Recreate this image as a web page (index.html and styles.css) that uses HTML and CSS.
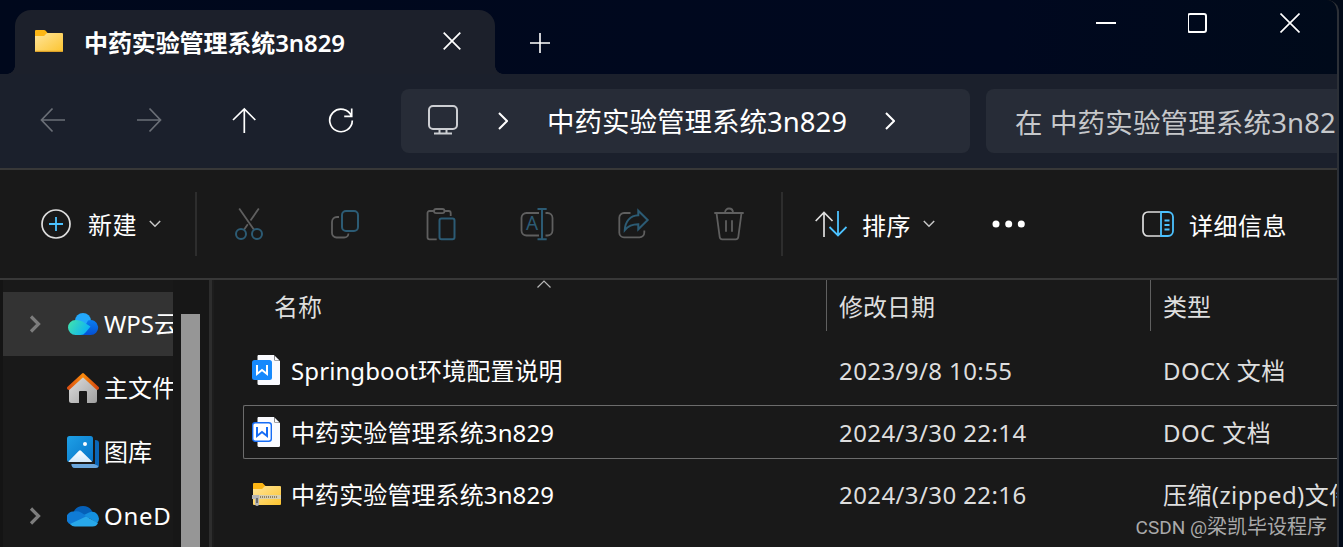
FILE: index.html
```html
<!DOCTYPE html>
<html lang="zh-CN">

<head>
    <meta charset="UTF-8">
    <meta name="viewport" content="width=device-width, initial-scale=1.0">
    <title>中药实验管理系统3n829</title>
    <link rel="stylesheet" href="styles.css">
</head>

<body>
    <div class="window">
        <header class="titlebar">
            <div class="tab">
                <svg class="tab-icon" width="28" height="22" viewBox="0 0 28 22">
                    <defs>
                        <linearGradient id="folder" x1="0" y1="0" x2="1" y2="1">
                            <stop offset="0" stop-color="#ffe59b" />
                            <stop offset="1" stop-color="#fcc42f" />
                        </linearGradient>
                    </defs>
                    <path d="M0 1q0-1 1-1h8q1 0 1.700.8L13 3.500V7H0z" fill="#fdb614" />
                    <path d="M0 6h9l3-3h15q1 0 1 1v17q0 1-1 1H1q-1 0-1-1z" fill="url(#folder)" />
                    <path d="M0.500 21.500h27" stroke="#dda128" />
                </svg>
                <span class="tab-title">中药实验管理系统3n829</span>
                <svg class="tab-close" width="18" height="18" viewBox="0 0 18 18">
                    <path d="M.7.700l16.600 16.600M17.300.700L.7 17.300" />
                </svg>
            </div>
            <svg class="new-tab" width="20" height="20" viewBox="0 0 20 20">
                <path d="M10 0v20M0 10h20" />
            </svg>
            <div class="controls">
                <svg width="20" height="20" viewBox="0 0 20 20"><path d="M0 10h20" /></svg>
                <svg width="20" height="20" viewBox="0 0 20 20"><rect x="1" y="1" width="18" height="18" rx="2" /></svg>
                <svg class="thin" width="20" height="20" viewBox="0 0 20 20"><path d="M.5.500l19 19M19.500.500l-19 19" /></svg>
            </div>
        </header>

        <nav class="navbar">
            <div class="nav-buttons">
                <svg class="off" width="26" height="26" viewBox="0 0 26 26"><path d="M25 13H1.500M12.500 1.500L1.500 13l11 11.500" /></svg>
                <svg class="off" width="26" height="26" viewBox="0 0 26 26"><path d="M1 13h23.500M13.500 1.500l11 11.500-11 11.500" /></svg>
                <svg width="26" height="26" viewBox="0 0 26 26"><path d="M12.300 26V2M1 13L12.300 2l11 11" /></svg>
                <svg width="26" height="26" viewBox="0 0 26 26"><path d="M23.500 9.200a11.300 11.300 0 1 0 .8 4.300M23.700 1.500v7.800h-7.500" /></svg>
            </div>
            <div class="address">
                <svg class="pc" width="32" height="32" viewBox="0 0 32 32">
                    <rect x="2" y="2" width="28" height="23" rx="4" />
                    <path d="M12.500 25v4M19.500 25v4M7 29.500h18" />
                </svg>
                <svg class="crumb-arrow" width="10" height="18" viewBox="0 0 10 18"><path d="M1 1l8 8-8 8" /></svg>
                <span class="crumb">中药实验管理系统3n829</span>
                <svg class="crumb-arrow" width="10" height="18" viewBox="0 0 10 18"><path d="M1 1l8 8-8 8" /></svg>
            </div>
            <div class="search"><span>在 中药实验管理系统3n82</span></div>
        </nav>

        <div class="commands">
            <div class="command new">
                <svg width="30" height="30" viewBox="0 0 30 30">
                    <circle class="light" cx="15" cy="15" r="14" />
                    <path class="accent" d="M15 8v14M8 15h14" />
                </svg>
                <span>新建</span>
                <svg class="down" width="12" height="8" viewBox="0 0 12 8"><path d="M.8 1L6 6.200 11.200 1" /></svg>
            </div>
            <div class="tools">
                <svg width="32" height="32" viewBox="0 0 32 32">
                    <path d="M6.200.500L20.800 21.500M25.800.500L17.500 12.500M14.800 16.300L11 21.800" />
                    <circle class="blue" cx="8" cy="26" r="5" />
                    <circle class="blue" cx="24" cy="26" r="5" />
                </svg>
                <svg width="32" height="32" viewBox="0 0 32 32">
                    <path d="M10 9H8a5 5 0 0 0-5 5v11a4.500 4.500 0 0 0 4.500 4.500H15a4.500 4.500 0 0 0 4.500-4" />
                    <rect class="blue" x="13" y="3" width="16" height="20" rx="4" />
                </svg>
                <svg width="32" height="32" viewBox="0 0 32 32">
                    <path d="M9 3H4.500a2 2 0 0 0-2 2v24.300a2 2 0 0 0 2 2h7.200M19.500 3h4.200a2 2 0 0 1 2 2v3" />
                    <rect x="9" y="1" width="10.500" height="4.200" rx="2.100" />
                    <rect class="blue" x="14.500" y="10.500" width="15" height="20.800" rx="2" />
                </svg>
                <svg width="32" height="32" viewBox="0 0 32 32">
                    <path d="M18 5H5.500a5 5 0 0 0-5 5v12.500a5 5 0 0 0 5 5H18M24.500 5h2a5 5 0 0 1 5 5v12.500a5 5 0 0 1-5 5h-2" />
                    <path class="blue" d="M21 .8v30.500M16.500.900h9.200M16.500 31.200h9.200" />
                    <text x="11" y="22.300" text-anchor="middle" class="letter">A</text>
                </svg>
                <svg width="32" height="32" viewBox="0 0 32 32">
                    <path d="M13.500 5H7a4.700 4.700 0 0 0-4.700 4.700v15A4.700 4.700 0 0 0 7 29.300h15.600a4.700 4.700 0 0 0 4.700-4.700V22.500" />
                    <path class="blue" d="M21.300 2.700L30.700 12l-9.400 9.300v-5c-6 0-10 1.500-13.500 5.700C8.200 13.500 13 7.600 21.300 7.300z" />
                </svg>
                <svg width="32" height="32" viewBox="0 0 32 32">
                    <path d="M1.300 5h29.400M12 5c0-6 8-6 8 0M3.500 5l3.200 24a2.500 2.500 0 0 0 2.500 2.300h13.600a2.500 2.500 0 0 0 2.500-2.300L28.500 5M13 12.300v11.500M19 12.300v11.500" />
                </svg>
            </div>
            <div class="command sort">
                <svg width="32" height="26" viewBox="0 0 32 26">
                    <path class="light" d="M9 26V1.500M.7 10L9 1.500l8.500 8.500" />
                    <path class="accent" d="M23 0v24.500M14.500 16l8.500 8.500 8.500-8.500" />
                </svg>
                <span>排序</span>
                <svg class="down" width="12" height="8" viewBox="0 0 12 8"><path d="M.8 1L6 6.200 11.200 1" /></svg>
            </div>
            <svg class="more" width="34" height="8" viewBox="0 0 34 8">
                <circle cx="4" cy="4" r="3.500" />
                <circle cx="16.700" cy="4" r="3.500" />
                <circle cx="29.300" cy="4" r="3.500" />
            </svg>
            <div class="command details">
                <svg width="32" height="26" viewBox="0 0 32 26">
                    <path class="light" d="M18.500 1H6a5 5 0 0 0-5 5v14a5 5 0 0 0 5 5h12.500" />
                    <path class="accent" d="M19 1h7a5 5 0 0 1 5 5v14a5 5 0 0 1-5 5h-7zM22.500 9.500h5M22.500 14h5M22.500 18.500h5" />
                </svg>
                <span>详细信息</span>
            </div>
        </div>

        <main class="content">
            <aside class="sidebar">
                <ul class="tree">
                    <li class="active">
                        <svg class="expand" width="12" height="18" viewBox="0 0 12 18"><path d="M2 1.500L9.500 9 2 16.500" /></svg>
                        <svg width="32" height="32" viewBox="0 0 32 32">
                            <defs>
                                <linearGradient id="wpsLeft" x1="0" y1=".3" x2="1" y2=".7">
                                    <stop offset="0" stop-color="#3ee0b0" />
                                    <stop offset="1" stop-color="#08aefc" />
                                </linearGradient>
                                <linearGradient id="wpsRight" x1="0" y1="0" x2="0" y2="1">
                                    <stop offset="0" stop-color="#0a7df0" />
                                    <stop offset="1" stop-color="#0450d4" />
                                </linearGradient>
                            </defs>
                            <circle cx="16" cy="13" r="8" fill="#23a8fb" />
                            <path d="M13 27l8-14.500a7.500 7.500 0 1 1 2 14.500z" fill="url(#wpsRight)" />
                            <path d="M8.500 12a7.500 7.500 0 0 0 0 15h5q3 0 5-2.500l5-6-8-5q-3-1.500-7-1.500z" fill="url(#wpsLeft)" />
                        </svg>
                        <span>WPS云</span>
                    </li>
                    <li>
                        <i class="expand"></i>
                        <svg width="32" height="32" viewBox="0 0 32 32">
                            <defs>
                                <linearGradient id="wall" x1="0" y1="0" x2="1" y2="1">
                                    <stop offset="0" stop-color="#e0e0e0" />
                                    <stop offset="1" stop-color="#a0a0a0" />
                                </linearGradient>
                                <linearGradient id="roof" x1="0" y1="0" x2="1" y2="0">
                                    <stop offset="0" stop-color="#dc5212" />
                                    <stop offset=".5" stop-color="#f98a0c" />
                                    <stop offset="1" stop-color="#d64a10" />
                                </linearGradient>
                            </defs>
                            <path d="M2 15L16 3l14 12v13.500q0 2.500-2.500 2.500H20V20q0-1-1-1h-6q-1 0-1 1v11H4.500Q2 31 2 28.500z" fill="url(#wall)" />
                            <path d="M1.800 16L16 3l14.200 13" fill="none" stroke="url(#roof)" stroke-width="3.600" stroke-linecap="round" stroke-linejoin="round" />
                        </svg>
                        <span>主文件</span>
                    </li>
                    <li>
                        <i class="expand"></i>
                        <svg width="32" height="32" viewBox="0 0 32 32">
                            <defs>
                                <linearGradient id="photo" x1="0" y1="0" x2="1" y2="1">
                                    <stop offset="0" stop-color="#1ea0e6" />
                                    <stop offset="1" stop-color="#0874c8" />
                                </linearGradient>
                                <linearGradient id="hill" x1="0" y1="0" x2="0" y2="1">
                                    <stop offset="0" stop-color="#fff" />
                                    <stop offset="1" stop-color="#d4e9fa" />
                                </linearGradient>
                            </defs>
                            <path d="M28 4q4 0 4 3v22q0 3-3 3H8q-3.500 0-3.500-4H28z" fill="#0b66b8" />
                            <path d="M4.500 28H27l4.500 2q-.5 2-3 2H8q-3.500 0-3.500-4z" fill="#6ba6dc" />
                            <rect x="-1" y="-1" width="29" height="29" rx="3" fill="#191919" />
                            <rect width="26" height="26" rx="2.500" fill="url(#photo)" />
                            <path d="M1.500 25.500L12 14.700q1-1 2 0L25 25.500q-.5.500-1.500.5H3q-1 0-1.500-.5z" fill="url(#hill)" />
                            <circle cx="18" cy="8" r="2" fill="#fff" />
                        </svg>
                        <span>图库</span>
                    </li>
                    <li>
                        <svg class="expand" width="12" height="18" viewBox="0 0 12 18"><path d="M2 1.500L9.500 9 2 16.500" /></svg>
                        <svg width="32" height="32" viewBox="0 0 32 32">
                            <path d="M6.500 12a10.500 10.500 0 0 1 19 0l-5 8z" fill="#0560b8" />
                            <path d="M7 11.500q4-1 7 1l9 5.500L4 24.500a6.700 6.700 0 0 1 3-13z" fill="#0f7bd6" />
                            <path d="M17 15l5-2.500q5-2 8 1.500 4 5 0 9z" fill="#1490df" />
                            <path d="M3 24l16-7.500 12 6.500q-1.500 3.500-5.500 3.500H8q-3 0-5-2.500z" fill="#28a8ea" />
                        </svg>
                        <span class="onedrive">OneD</span>
                    </li>
                </ul>
                <div class="scrollbar"><div class="thumb"></div></div>
            </aside>

            <section class="files">
                <div class="row head">
                    <span class="name">名称
                        <svg class="sorted" width="14" height="8" viewBox="0 0 14 8"><path d="M.5 7.500L7 1l6.500 6.500" /></svg>
                    </span>
                    <span>修改日期</span>
                    <span>类型</span>
                </div>
                <div class="row">
                    <span class="name">
                        <svg width="30" height="32" viewBox="0 0 30 32">
                            <path d="M6 1h16l6 6v22.500q0 1.500-1.500 1.500H7q-1.500 0-1.500-1.500V2z" fill="#fafbff" />
                            <path d="M22.500 1V6.500H28z" fill="#191919" />
                            <path d="M23 2v4.300h4.300z" fill="#fafbff" />
                            <rect y="6" width="20" height="20" rx="2.500" fill="#1689fc" />
                            <polyline points="5,11 5,20 10,16 15,20 15,11" fill="none" stroke="#fff" stroke-width="2" />
                        </svg>
                        Springboot环境配置说明
                    </span>
                    <span>2023/9/8 10:55</span>
                    <span>DOCX 文档</span>
                </div>
                <div class="row focused">
                    <span class="name">
                        <svg width="30" height="32" viewBox="0 0 30 32">
                            <path d="M6 1h16l6 6v22.500q0 1.500-1.500 1.500H7q-1.500 0-1.500-1.500V2z" fill="#fafbff" />
                            <path d="M22.500 1V6.500H28z" fill="#191919" />
                            <path d="M23 2v4.300h4.300z" fill="#fafbff" />
                            <rect x=".7" y="6.700" width="18.600" height="18.600" rx="2.500" fill="#fff" stroke="#176df5" stroke-width="1.400" />
                            <polyline points="5,11 5,20 10,16 15,20 15,11" fill="none" stroke="#176df5" stroke-width="2" />
                        </svg>
                        中药实验管理系统3n829
                    </span>
                    <span>2024/3/30 22:14</span>
                    <span>DOC 文档</span>
                </div>
                <div class="row">
                    <span class="name">
                        <svg width="30" height="32" viewBox="0 0 30 32">
                            <path d="M1 6q0-1 1-1h8.500l3.500 3.500V13H1z" fill="#fdb614" />
                            <path d="M1 11h9l3-3h15q1 0 1 1v17q0 1-1 1H2q-1 0-1-1z" fill="url(#folder)" />
                            <path d="M5 19h24" stroke="#d8cfae" stroke-width="4" />
                            <path d="M8 19h18" stroke="#77694a" stroke-width="1.500" stroke-dasharray="1 1" />
                            <path d="M0 17h7v9q0 2-2 2t-2-2v-5H0z" fill="#b5b5b5" />
                            <path d="M4 20h2v5H4z" fill="#6c6c6c" />
                        </svg>
                        中药实验管理系统3n829
                    </span>
                    <span>2024/3/30 22:16</span>
                    <span>压缩(zipped)文件夹</span>
                </div>
            </section>
        </main>
    </div>
    <div class="watermark"><span>CSDN @</span>梁凯毕设程序</div>
</body>

</html>
```
FILE: styles.css
```css
* {
    box-sizing: border-box;
}

body {
    margin: 0;
    height: 547px;
    overflow: hidden;
    background-color: #020a18;
    color: #fff;
    font-family: "Noto Sans", "Noto Sans CJK SC", sans-serif;
    font-size: 24px;
    line-height: 32px;
    white-space: nowrap;
}

svg {
    display: block;
    flex: none;
    fill: none;
    stroke: #fff;
    stroke-width: 1.5;
}

.window {
    display: flex;
    flex-direction: column;
    width: 1339px;
    height: 547px;
    border-right: 2px solid #2c3037;
    border-top-right-radius: 12px;
    background-color: #191919;
    overflow: hidden;
}

/* title bar */
.titlebar {
    display: flex;
    height: 74px;
    flex: none;
    padding: 10px 0 0 15px;
    background: linear-gradient(90deg, #00081c, #00081f 75%, #000a1a);
}

.tab {
    position: relative;
    display: flex;
    align-items: center;
    width: 480px;
    height: 64px;
    padding: 0 34px 2px 20px;
    border-radius: 16px 16px 0 0;
    background-color: #1c202b;
}

.tab::before,
.tab::after {
    content: "";
    position: absolute;
    bottom: 0;
    width: 8px;
    height: 8px;
}

.tab::before {
    left: -8px;
    background: radial-gradient(circle at 0 0, transparent 7.5px, #1c202b 8px);
}

.tab::after {
    right: -8px;
    background: radial-gradient(circle at 100% 0, transparent 7.5px, #1c202b 8px);
}

.tab-icon,
.tree svg,
.row svg {
    stroke: none;
}

.tab-title {
    margin: 4px 0 0 21px;
    font-weight: 600;
    letter-spacing: -0.1px;
}

.tab-close {
    margin-left: auto;
    stroke-width: 1.7;
}

.new-tab {
    margin: 23px 0 0 35px;
    stroke-width: 1.6;
}

.controls {
    display: flex;
    gap: 72px;
    margin: 3px 37px 0 auto;
}

.controls svg {
    stroke-width: 2;
}

.controls rect {
    transform: translateX(-1px);
}

.controls .thin {
    stroke-width: 1.6;
}

/* address row */
.navbar {
    display: flex;
    height: 96px;
    flex: none;
    padding-top: 15px;
    border-bottom: 2px solid #383838;
    background-color: #1b202c;
    font-size: 27.5px;
}

.nav-buttons {
    display: flex;
    align-items: center;
    gap: 70px;
    width: 401px;
    height: 64px;
    padding: 0 0 2px 40px;
}

.nav-buttons svg {
    stroke-width: 1.7;
}

.nav-buttons .off {
    stroke: #6b6f77;
}

.address,
.search {
    display: flex;
    align-items: center;
    height: 64px;
    border-radius: 8px;
    background-color: #272c37;
}

.address {
    width: 569px;
    flex: none;
    padding-left: 26px;
}

.pc {
    margin-bottom: 2px;
    stroke: #ccced2;
    stroke-width: 2;
}

.crumb-arrow {
    stroke-width: 2;
    margin-left: 39px;
}

.crumb {
    margin: 2px 0 0 39px;
}

.crumb + .crumb-arrow {
    margin-left: 38px;
}

.search {
    flex: none;
    width: 351px;
    margin-left: 16px;
    padding: 3px 0 0 29px;
    border-radius: 8px 0 0 8px;
    color: #c6c8cb;
    letter-spacing: 0.15px;
    overflow: hidden;
}

/* command bar */
.commands {
    display: flex;
    align-items: center;
    height: 110px;
    flex: none;
    padding-left: 41px;
    border-bottom: 2px solid #383838;
}

.command {
    display: flex;
    align-items: center;
}

.command span {
    margin: 3px 0 0 17px;
    letter-spacing: 0.5px;
}

.command .down {
    margin-left: 12px;
    stroke: #c8c8c8;
}

.commands .light {
    stroke: #dedede;
    stroke-width: 1.7;
}

.commands .accent {
    stroke: #4cc2ff;
    stroke-width: 1.8;
}

.new {
    width: 154px;
    padding-bottom: 1px;
}

.tools {
    display: flex;
    width: 588px;
    height: 64px;
    align-items: center;
    padding: 0 4px;
    border: solid #2d2d2d;
    border-width: 0 2px;
}

.tools svg {
    margin: 0 32px;
    stroke: #5f5f5f;
    stroke-width: 1.8;
    overflow: visible;
}

.tools .blue {
    stroke: #2c5b74;
    stroke-width: 2;
}

.tools .letter {
    fill: #2c5b74;
    stroke: none;
    font-size: 19px;
}

.sort {
    margin-left: 32px;
}

.sort span {
    margin-left: 15px;
}

.more {
    margin-left: 57px;
    fill: #fff;
    stroke: none;
}

.details {
    margin-left: 116px;
}

.details span {
    margin-left: 15px;
}

/* navigation pane */
.content {
    display: flex;
    flex: 1;
    min-height: 0;
}

.sidebar {
    display: flex;
    width: 214px;
    flex: none;
    padding-left: 3px;
    background: linear-gradient(90deg, #141414 3px, #191919 3px, #191919 173px, #171717 173px, #171717 209px, #2d2d2d 209px, #2d2d2d 212px, #1d1d1d 212px);
}

.tree {
    width: 170px;
    margin: 0;
    padding: 12px 0 0;
    list-style: none;
    overflow: hidden;
}

.tree li {
    display: flex;
    align-items: center;
    height: 64px;
    padding-left: 26px;
}

.tree .active {
    background-color: #333;
}

.tree span {
    margin-left: 5px;
}

.tree .onedrive {
    letter-spacing: 0.7px;
}

.tree .expand {
    flex: none;
    width: 12px;
    margin-right: 26px;
    stroke: #7d7d7d;
    stroke-width: 3.2;
}

.scrollbar {
    padding: 34px 0 0 8px;
}

.thumb {
    width: 19px;
    height: 233px;
    background-color: #969696;
}

/* file list */
.files {
    flex: 1;
    min-width: 0;
    padding-left: 29px;
    overflow: hidden;
}

.row {
    display: grid;
    grid-template-columns: 583px 324px 1fr;
    align-items: center;
    height: 54px;
    margin: 0 0 8px;
    padding-top: 2px;
    border: 1px solid transparent;
    border-right: 0;
    color: #dedede;
    letter-spacing: 0.4px;
}

.row .name {
    display: flex;
    align-items: center;
    gap: 9px;
    padding-left: 8px;
    color: #fff;
    letter-spacing: 0.1px;
}

.row .name svg {
    margin-bottom: 2px;
}

.row > span + span {
    padding-left: 12px;
}

.focused {
    border-color: #6c6c6c;
    border-radius: 2px 0 0 2px;
}

.head {
    height: 51px;
    margin: 0 0 12px;
    padding-top: 0;
    border-width: 0;
    letter-spacing: 0;
}

.head > span {
    height: 51px;
    padding-top: 11px;
}

.head > span + span {
    border-left: 1px solid #606060;
}

.head .name {
    position: relative;
    display: block;
    padding-left: 31px;
    color: #dedede;
}

.head .sorted {
    position: absolute;
    top: 0;
    left: 294px;
    stroke: #b8b8b8;
    stroke-width: 1.2;
}

.watermark {
    position: absolute;
    right: 16px;
    bottom: 3px;
    color: #aaa;
    font-family: Roboto, "Noto Sans CJK SC", sans-serif;
    font-size: 20px;
    line-height: 32px;
}

.watermark span {
    font-size: 19px;
}
```
